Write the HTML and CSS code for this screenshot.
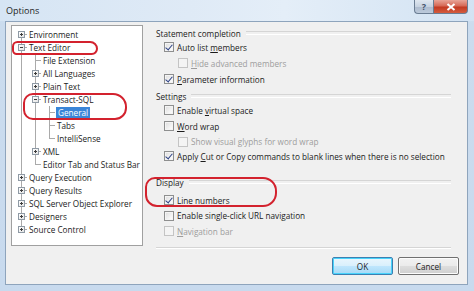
FILE: index.html
```html
<!DOCTYPE html>
<html>
<head>
<meta charset="utf-8">
<link rel="stylesheet" href="styles.css">
</head>
<body>
<div class="window">
  <div class="titlebar">
    <span class="title">Options</span>
    <div class="caption">
      <span class="cap help">?</span>
      <span class="cap close">
        <svg width="10" height="8" viewBox="0 0 10 8"><path d="M1.5 1 L8.5 7 M8.5 1 L1.5 7" stroke="#fff" stroke-width="2"/></svg>
      </span>
    </div>
  </div>
  <div class="frame">
    <div class="client">
      <div class="main">
        <div class="tree">
          <div class="node"><span class="x first"><i class="box plus"></i></span><span class="label">Environment</span></div>
          <div class="node"><span class="x mid"><i class="box"></i></span><span class="label">Text Editor</span></div>
          <div class="node"><span class="g line"></span><span class="x mid"></span><span class="label">File Extension</span></div>
          <div class="node"><span class="g line"></span><span class="x mid"><i class="box plus"></i></span><span class="label">All Languages</span></div>
          <div class="node"><span class="g line"></span><span class="x mid"><i class="box plus"></i></span><span class="label">Plain Text</span></div>
          <div class="node"><span class="g line"></span><span class="x mid"><i class="box"></i></span><span class="label">Transact-SQL</span></div>
          <div class="node"><span class="g line"></span><span class="g line"></span><span class="x mid"></span><span class="label selected">General</span></div>
          <div class="node"><span class="g line"></span><span class="g line"></span><span class="x mid"></span><span class="label">Tabs</span></div>
          <div class="node"><span class="g line"></span><span class="g line"></span><span class="x last"></span><span class="label">IntelliSense</span></div>
          <div class="node"><span class="g line"></span><span class="x mid"><i class="box plus"></i></span><span class="label">XML</span></div>
          <div class="node"><span class="g line"></span><span class="x last"></span><span class="label">Editor Tab and Status Bar</span></div>
          <div class="node"><span class="x mid"><i class="box plus"></i></span><span class="label">Query Execution</span></div>
          <div class="node"><span class="x mid"><i class="box plus"></i></span><span class="label">Query Results</span></div>
          <div class="node"><span class="x mid"><i class="box plus"></i></span><span class="label">SQL Server Object Explorer</span></div>
          <div class="node"><span class="x mid"><i class="box plus"></i></span><span class="label">Designers</span></div>
          <div class="node"><span class="x last"><i class="box plus"></i></span><span class="label">Source Control</span></div>
        </div>
        <div class="options">
          <div class="group">
            <div class="head">Statement completion</div>
            <div class="row"><span class="cb checked"></span><span>Auto list <u>m</u>embers</span></div>
            <div class="row sub disabled"><span class="cb"></span><span><u>H</u>ide advanced members</span></div>
            <div class="row"><span class="cb checked"></span><span><u>P</u>arameter information</span></div>
          </div>
          <div class="group settings">
            <div class="head">Settings</div>
            <div class="row"><span class="cb"></span><span>Enable <u>v</u>irtual space</span></div>
            <div class="row"><span class="cb"></span><span><u>W</u>ord wrap</span></div>
            <div class="row sub disabled tight"><span class="cb"></span><span>Show visual glyphs for word wrap</span></div>
            <div class="row tighter"><span class="cb checked"></span><span>Apply <u>C</u>ut or Copy commands to blank lines when there is no selection</span></div>
          </div>
          <div class="group display">
            <div class="head">Display</div>
            <div class="row"><span class="cb checked"></span><span>Line numbers</span></div>
            <div class="row tight"><span class="cb"></span><span>Enable single-click URL navigation</span></div>
            <div class="row disabled"><span class="cb"></span><span><u>N</u>avigation bar</span></div>
          </div>
          <div class="separator"></div>
        </div>
      </div>
      <div class="buttons">
        <button class="btn default">OK</button>
        <button class="btn">Cancel</button>
      </div>
    </div>
  </div>
  <div class="mark mark-editor"></div>
  <div class="mark mark-tsql"></div>
  <div class="mark mark-display"></div>
</div>
</body>
</html>
```
FILE: styles.css
```css
* { box-sizing: border-box; }
html, body { margin: 0; padding: 0; }
body {
  width: 474px;
  height: 291px;
  overflow: hidden;
  font-family: "Open Sans", "Noto Sans", sans-serif;
  font-size: 8.2px;
  color: #1b1b1b;
  background: #c9dbee;
}
.window {
  position: relative;
  width: 474px;
  height: 291px;
  display: flex;
  flex-direction: column;
  background: linear-gradient(180deg, #dbe8f5 0%, #cbdcee 8%, #c8daee 100%);
}
.titlebar {
  height: 21px;
  display: flex;
  align-items: flex-start;
  background: linear-gradient(90deg, #d6e5f4 0%, #dfeaf6 40%, #e4eef8 60%, #d3e3f3 100%);
}
.title {
  padding: 5px 0 0 6px;
  font-size: 9px;
  line-height: 12px;
  color: #1e1e1e;
}
.caption {
  margin-left: auto;
  margin-right: 6px;
  display: flex;
}
.cap {
  height: 14px;
  display: flex;
  align-items: center;
  justify-content: center;
  border: 1px solid #6a7d93;
  border-top: none;
}
.help {
  width: 19px;
  border-right: none;
  border-radius: 0 0 0 4px;
  background: linear-gradient(180deg, #dfe7f0 0%, #c7d3e1 50%, #aebccf 55%, #bccadb 100%);
  color: #44546b;
  font-size: 9px;
  font-weight: bold;
}
.close {
  width: 35px;
  border-radius: 0 0 4px 0;
  background: linear-gradient(180deg, #e8a497 0%, #d66a57 45%, #c33a22 55%, #d45c3f 100%);
}
.frame {
  flex: 1;
  display: flex;
  padding: 0 6px 6px 5px;
}
.client {
  flex: 1;
  display: flex;
  flex-direction: column;
  background: #f0f0f0;
  border: 1px solid #8ea4bc;
}
.main {
  display: flex;
  height: 224px;
  padding: 3px 0 0 5px;
}
.tree {
  width: 132px;
  height: 221px;
  background: #fff;
  border: 1px solid #a0a0a0;
  padding: 2px 0 0 2px;
}
.node {
  display: flex;
  height: 13px;
  align-items: center;
  white-space: nowrap;
}
.g, .x {
  position: relative;
  width: 14px;
  height: 13px;
  flex: none;
}
.g.line::before, .x::before {
  content: "";
  position: absolute;
  left: 7px;
  width: 1px;
  top: 0;
  bottom: 0;
  background: #aaaaaa;
}
.x.first::before { top: 6px; }
.x.last::before { bottom: 7px; }
.x::after {
  content: "";
  position: absolute;
  left: 7px;
  right: 1px;
  top: 6px;
  height: 1px;
  background: #aaaaaa;
}
.box {
  position: absolute;
  left: 4px;
  top: 3px;
  width: 7px;
  height: 7px;
  z-index: 1;
  border: 1px solid #8f9aa5;
  background: linear-gradient(135deg, #ffffff 0%, #e4e4e4 100%);
}
.box::before {
  content: "";
  position: absolute;
  left: 1px;
  top: 2px;
  width: 3px;
  height: 1px;
  background: #3c3c3c;
}
.box.plus::after {
  content: "";
  position: absolute;
  left: 2px;
  top: 1px;
  width: 1px;
  height: 3px;
  background: #3c3c3c;
}
.label {
  padding: 0 2px 0 1px;
  line-height: 11px;
}
.label.selected {
  background: #3a86d8;
  color: #fff;
  padding: 0 2px;
}
.options {
  margin-left: 13px;
  width: 295px;
  padding-top: 2px;
}
.head {
  display: flex;
  align-items: center;
  gap: 5px;
  height: 12px;
  white-space: nowrap;
}
.head::after {
  content: "";
  flex: 1;
  height: 2px;
  border-top: 1px solid #d5d5d5;
  border-bottom: 1px solid #ffffff;
}
.row {
  display: flex;
  align-items: center;
  gap: 3px;
  height: 16px;
  padding-left: 8px;
  white-space: nowrap;
}
.row.sub { padding-left: 22px; }
.row.tight { height: 15px; }
.row.tighter { height: 14px; }
.row.disabled { color: #9d9d9d; }
.settings { margin-top: 3px; }
.display { margin-top: 13px; }
.display .head { margin-bottom: 4px; }
.cb {
  flex: none;
  position: relative;
  width: 10px;
  height: 10px;
  border: 1px solid #8e8f8f;
  background: linear-gradient(135deg, #dcdcdc 0%, #f6f6f6 70%, #ffffff 100%);
  box-shadow: inset 0 0 0 1px #f4f4f4;
}
.disabled .cb {
  border-color: #c4c4c4;
  background: #f4f4f4;
  box-shadow: none;
}
.cb.checked::after {
  content: "";
  position: absolute;
  left: 2px;
  top: 0;
  width: 3px;
  height: 6px;
  border-right: 1.5px solid #2d4286;
  border-bottom: 1.5px solid #2d4286;
  transform: rotate(40deg);
}
.separator {
  margin-top: 8px;
  height: 2px;
  border-top: 1px solid #d5d5d5;
  border-bottom: 1px solid #ffffff;
}
.buttons {
  display: flex;
  justify-content: flex-end;
  gap: 5px;
  padding: 11px 8px 0 0;
}
.btn {
  width: 61px;
  height: 18px;
  padding: 0;
  font-family: inherit;
  font-size: 8.2px;
  color: #1b1b1b;
  border: 1px solid #707070;
  border-radius: 2px;
  background: linear-gradient(180deg, #f2f2f2 0%, #ebebeb 48%, #dddddd 52%, #cfcfcf 100%);
  box-shadow: inset 0 0 0 1px #fcfcfc;
}
.btn.default {
  border-color: #3c7fb1;
  background: linear-gradient(180deg, #eaf6fd 0%, #d9f0fc 48%, #bee6fd 52%, #a7d9f5 100%);
  box-shadow: inset 0 0 0 1px #48d3fb;
}
.mark {
  position: absolute;
  border: 2px solid #d3222e;
  pointer-events: none;
}
.mark-editor {
  left: 12px;
  top: 41px;
  width: 86px;
  height: 14px;
  border-radius: 7px 10px 8px 6px;
}
.mark-tsql {
  left: 23px;
  top: 93px;
  width: 104px;
  height: 27px;
  border-radius: 10px 14px 12px 10px;
}
.mark-display {
  left: 145px;
  top: 177px;
  width: 132px;
  height: 30px;
  border-radius: 10px 14px 14px 12px;
}
```
